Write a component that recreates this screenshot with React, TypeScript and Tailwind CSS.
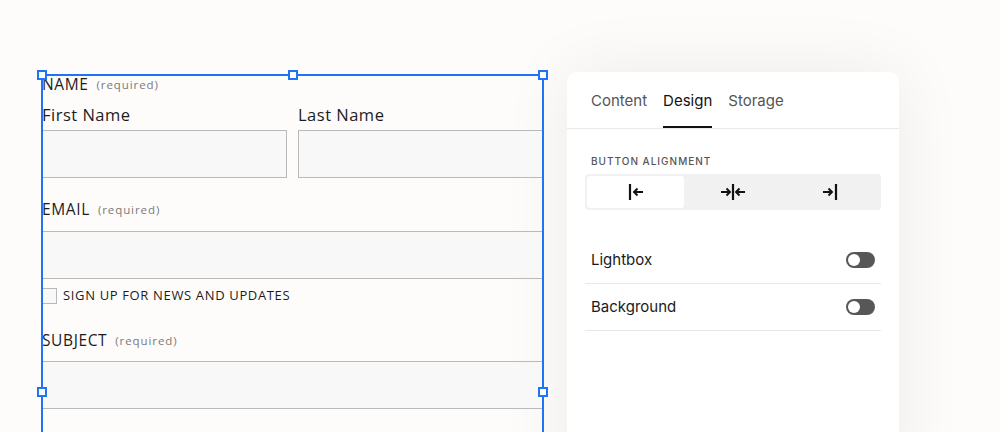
import React from "react";

const blue = "border-[#1f74f5]";

function Handle({ className }: { className: string }) {
  return (
    <div
      className={`absolute h-[10px] w-[10px] border-2 ${blue} bg-white ${className}`}
    />
  );
}

function FieldLabel({ text, required }: { text: string; required?: boolean }) {
  return (
    <div className="flex h-[20px] items-center gap-[8px]">
      <span className="text-[15.5px] tracking-[0.04em] text-[#1c1c1c]">{text}</span>
      {required && (
        <span className="text-[11.5px] tracking-[0.08em] text-[#7a7a7a]">(required)</span>
      )}
    </div>
  );
}

function Input({ className = "" }: { className?: string }) {
  return <div className={`h-[48px] border border-[#b9b9b9] bg-[#f8f8f8] ${className}`} />;
}

function AlignLeftIcon() {
  return (
    <svg width="16" height="20" viewBox="0 0 16 20" fill="none" stroke="#111" strokeWidth="2.2">
      <path d="M2 2v16" />
      <path d="M15 10H6.5M9.5 6.5L6 10l3.5 3.5" strokeWidth="1.9" />
    </svg>
  );
}

function AlignCenterIcon() {
  return (
    <svg width="26" height="20" viewBox="0 0 26 20" fill="none" stroke="#111" strokeWidth="2.2">
      <path d="M13 2v16" />
      <path d="M1 10h8.5M6.5 6.5L10 10l-3.5 3.5" strokeWidth="1.9" />
      <path d="M25 10h-8.5M19.5 6.5L16 10l3.5 3.5" strokeWidth="1.9" />
    </svg>
  );
}

function AlignRightIcon() {
  return (
    <svg width="16" height="20" viewBox="0 0 16 20" fill="none" stroke="#111" strokeWidth="2.2">
      <path d="M14 2v16" />
      <path d="M1 10h8.5M6.5 6.5L10 10l-3.5 3.5" strokeWidth="1.9" />
    </svg>
  );
}

function Toggle() {
  return (
    <div className="flex h-[16px] w-[29px] items-center rounded-full bg-[#575757] px-[2px]">
      <div className="h-[12px] w-[12px] rounded-full bg-white" />
    </div>
  );
}

export default function App() {
  return (
    <div className="relative h-[432px] w-[1000px] overflow-hidden bg-[#fdfcfb]">
      <div className="flex items-start pl-[42px] pt-[72px]">
        {/* selected form block */}
        <div className="relative mt-[2px] h-[636px] w-[502px] shrink-0">
          <div
            className="h-full overflow-hidden pr-[1px]"
            style={{ fontFamily: "'Open Sans', 'Noto Sans', sans-serif" }}
          >
            <div className="mt-[1px]">
              <FieldLabel text="NAME" required />
            </div>
            <div className="mt-[10px] flex gap-[11px]">
              <div className="w-[245px]">
                <div className="flex h-[20px] items-center text-[16.5px] tracking-[0.03em] text-[#1c1c1c]">
                  First Name
                </div>
                <Input className="mt-[5px]" />
              </div>
              <div className="flex-1">
                <div className="flex h-[20px] items-center text-[16.5px] tracking-[0.03em] text-[#1c1c1c]">
                  Last Name
                </div>
                <Input className="mt-[5px]" />
              </div>
            </div>
            <div className="mt-[22px]">
              <FieldLabel text="EMAIL" required />
            </div>
            <Input className="mt-[11px] h-[47px]" />
            <div className="mt-[9px] flex h-[16px] items-center gap-[6px]">
              <div className="h-[16px] w-[15px] border border-[#b9b9b9] bg-[#f8f8f8]" />
              <span className="text-[13px] tracking-[0.05em] text-[#1c1c1c]">
                SIGN UP FOR NEWS AND UPDATES
              </span>
            </div>
            <div className="mt-[27px]">
              <FieldLabel text="SUBJECT" required />
            </div>
            <Input className="mt-[10px]" />
          </div>
          {/* selection frame */}
          <div className={`pointer-events-none absolute inset-0 -left-[1px] border-2 ${blue}`} />
          <Handle className="-left-[5px] -top-[4px]" />
          <Handle className="left-[246px] -top-[4px]" />
          <Handle className="-right-[4px] -top-[4px]" />
          <Handle className="-left-[5px] top-[313px]" />
          <Handle className="-right-[4px] top-[313px]" />
        </div>

        {/* settings panel */}
        <div
          className="ml-[23px] h-[420px] w-[332px] shrink-0 rounded-[10px] bg-white shadow-[0_0_70px_rgba(0,0,0,0.07)]"
          style={{ fontFamily: "Inter, 'Liberation Sans', sans-serif" }}
        >
          <div className="flex h-[57px] gap-[16px] border-b border-[#e9e9e9] pl-[24px] text-[15px]">
            <div className="flex items-center border-b-2 border-transparent pt-[4px] text-[#555]">Content</div>
            <div className="flex items-center border-b-2 border-[#111] pt-[4px] text-[#111]">Design</div>
            <div className="flex items-center border-b-2 border-transparent pt-[4px] text-[#555]">Storage</div>
          </div>
          <div className="px-[18px]">
            <div className="mt-[25px] pl-[6px] text-[10px] font-medium tracking-[0.1em] text-[#555]">
              BUTTON ALIGNMENT
            </div>
            <div className="mt-[5px] grid h-[36px] grid-cols-3 rounded-[4px] bg-[#f1f1f1] p-[2px]">
              <div className="flex items-center justify-center rounded-[3px] bg-white">
                <AlignLeftIcon />
              </div>
              <div className="flex items-center justify-center">
                <AlignCenterIcon />
              </div>
              <div className="flex items-center justify-center">
                <AlignRightIcon />
              </div>
            </div>
            <div className="mt-[27px]">
              {["Lightbox", "Background"].map((label) => (
                <div
                  key={label}
                  className="flex h-[47px] items-center justify-between border-b border-[#e8e8e8] pl-[6px] pr-[6px]"
                >
                  <span className="text-[15px] text-[#1a1a1a]">{label}</span>
                  <Toggle />
                </div>
              ))}
            </div>
          </div>
        </div>
      </div>
    </div>
  );
}
